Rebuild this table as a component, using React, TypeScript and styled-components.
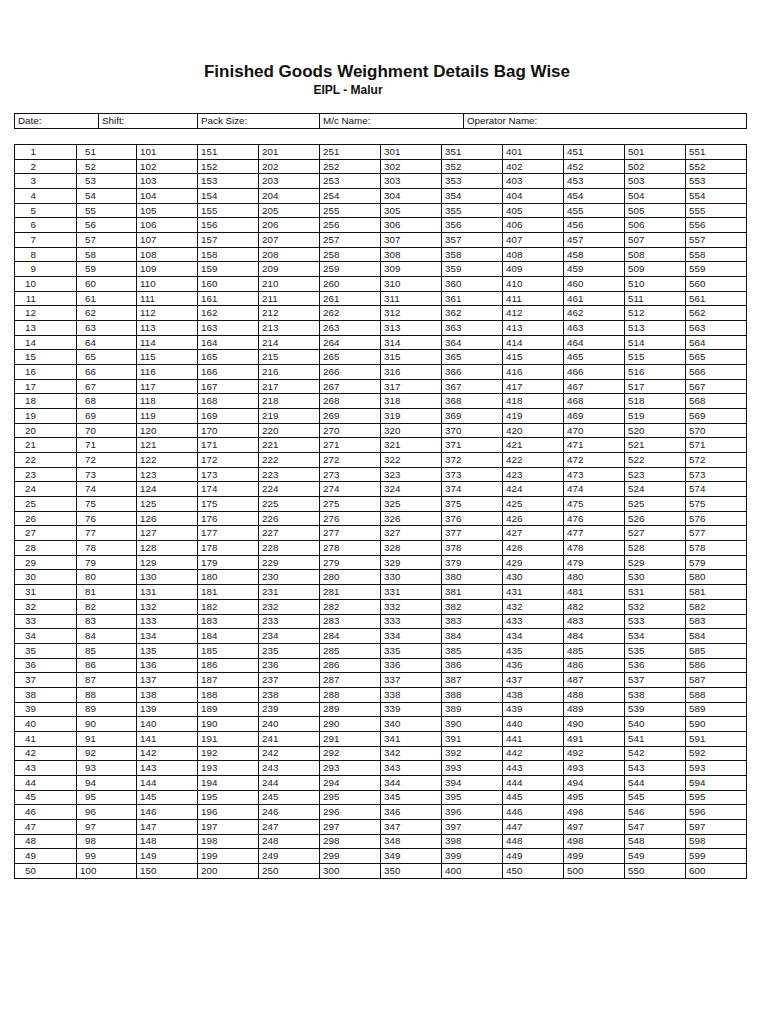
import React from "react";
import styled, { createGlobalStyle } from "styled-components";

const GlobalStyle = createGlobalStyle`
  html, body {
    margin: 0;
    padding: 0;
    background: #fff;
  }
  body {
    font-family: "Liberation Sans", Arial, sans-serif;
    color: #111;
  }
`;

const Page = styled.div`
  width: 768px;
  height: 1024px;
  padding-top: 62px;
  box-sizing: border-box;
  background: #fff;
`;

const Title = styled.h1`
  margin: 0;
  padding-left: 6px;
  font-size: 17px;
  line-height: 20px;
  font-weight: 700;
  text-align: center;
  color: #111;
`;

const Subtitle = styled.h2`
  margin: 1px 0 0;
  padding-right: 72px;
  font-size: 12px;
  line-height: 14px;
  font-weight: 700;
  text-align: center;
  color: #111;
`;

const InfoTable = styled.table`
  margin: 16px 0 0 14px;
  width: 732px;
  border-collapse: collapse;
  table-layout: fixed;
  border: 1.5px solid #111;
`;

const Col = styled.col<{ $w: number }>`
  width: ${(p) => p.$w}px;
`;

const InfoCell = styled.td`
  height: 14px;
  padding: 0 3px;
  border: 1px solid #111;
  font-size: 9.8px;
  line-height: 14px;
  text-align: left;
  vertical-align: middle;
  white-space: nowrap;
  overflow: hidden;
`;

const Grid = styled.table`
  margin: 15px 0 0 14px;
  width: 732px;
  border-collapse: collapse;
  table-layout: fixed;
  border: 1.5px solid #111;
`;

const Row = styled.tr`
  height: 14.68px;
`;

const Cell = styled.td`
  padding: 0 3px;
  border: 1px solid #111;
  font-size: 9.8px;
  line-height: 12px;
  text-align: left;
  vertical-align: middle;
  white-space: nowrap;
  overflow: hidden;
  color: #1a1a1a;
`;

const Num = styled.span<{ $box: number }>`
  display: inline-block;
  width: ${(p) => p.$box}px;
  text-align: right;
`;

const infoFields = [
  { label: "Date:", w: 84 },
  { label: "Shift:", w: 99 },
  { label: "Pack Size:", w: 122 },
  { label: "M/c Name:", w: 144 },
  { label: "Operator Name:", w: 283 },
];

const colWidths = [62, 60, 61, 61, 61, 61, 61, 61, 61, 61, 61, 61];
const rows = Array.from({ length: 50 }, (_, i) => i + 1);

// first two columns line their numbers up on the right, like the sheet
const rightBox: Record<number, number> = { 0: 18, 1: 16 };

const App: React.FC = () => {
  return (
    <>
      <GlobalStyle />
      <Page>
        <Title>Finished Goods Weighment Details Bag Wise</Title>
        <Subtitle>EIPL - Malur</Subtitle>
        <InfoTable>
          <colgroup>
            {infoFields.map((f) => (
              <Col key={f.label} $w={f.w} />
            ))}
          </colgroup>
          <tbody>
            <tr>
              {infoFields.map((f) => (
                <InfoCell key={f.label}>{f.label}</InfoCell>
              ))}
            </tr>
          </tbody>
        </InfoTable>
        <Grid>
          <colgroup>
            {colWidths.map((w, i) => (
              <Col key={i} $w={w} />
            ))}
          </colgroup>
          <tbody>
            {rows.map((r) => (
              <Row key={r}>
                {colWidths.map((_, c) => {
                  const value = r + c * 50;
                  return (
                    <Cell key={c}>
                      {c in rightBox ? <Num $box={rightBox[c]}>{value}</Num> : value}
                    </Cell>
                  );
                })}
              </Row>
            ))}
          </tbody>
        </Grid>
      </Page>
    </>
  );
};

export default App;
